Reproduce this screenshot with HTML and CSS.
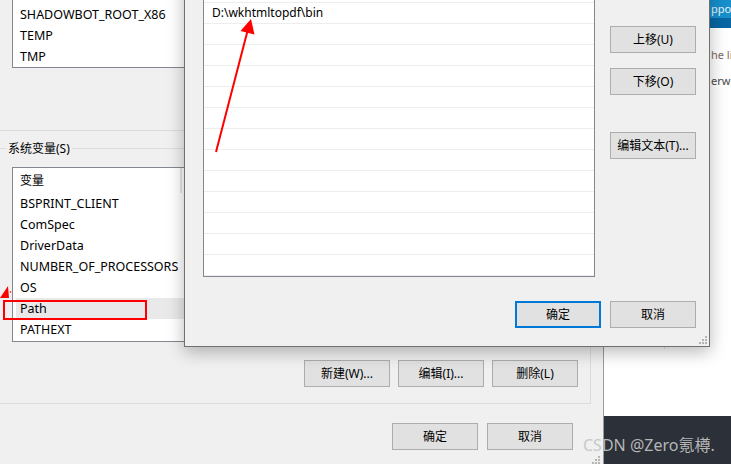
FILE: index.html
```html
<!DOCTYPE html>
<html lang="zh-CN">
<head>
<meta charset="utf-8">
<title>编辑环境变量</title>
<link rel="stylesheet" href="styles.css">
</head>
<body>
<div class="webpage">
  <div class="wp-top"><span class="wp-top-text">pport</span></div>
  <div class="wp-strip"></div>
  <div class="wp-body">
    <p class="wp-l1">he lin</p>
    <p class="wp-l2">erwis</p>
    <div class="wp-rule"></div>
  </div>
  <div class="wp-foot"></div>
</div>

<div class="back">
  <div class="group1">
    <div class="ulist">
      <div class="urow"></div>
      <div class="urow">SHADOWBOT_ROOT_X86</div>
      <div class="urow">TEMP</div>
      <div class="urow">TMP</div>
    </div>
  </div>
  <fieldset class="group2">
    <legend>系统变量(S)</legend>
    <div class="slist">
      <div class="shead"><div class="shead-col">变量</div></div>
      <div class="srow">BSPRINT_CLIENT</div>
      <div class="srow">ComSpec</div>
      <div class="srow">DriverData</div>
      <div class="srow">NUMBER_OF_PROCESSORS</div>
      <div class="srow">OS</div>
      <div class="srow sel">Path</div>
      <div class="srow">PATHEXT</div>
    </div>
    <div class="sbtns">
      <button class="btn">新建(W)...</button>
      <button class="btn">编辑(I)...</button>
      <button class="btn">删除(L)</button>
    </div>
  </fieldset>
  <div class="back-foot">
    <button class="btn">确定</button>
    <button class="btn">取消</button>
  </div>
  <svg class="grip back-grip" width="8" height="8" viewBox="0 0 8 8"><g fill="#b4b4b4"><rect x="6" y="0" width="2" height="2"/><rect x="3" y="3" width="2" height="2"/><rect x="6" y="3" width="2" height="2"/><rect x="0" y="6" width="2" height="2"/><rect x="3" y="6" width="2" height="2"/><rect x="6" y="6" width="2" height="2"/></g></svg>
</div>

<div class="front">
  <div class="front-main">
    <div class="plist">
      <div class="prow"></div>
      <div class="prow">D:\wkhtmltopdf\bin</div>
      <div class="prow"></div>
      <div class="prow"></div>
      <div class="prow"></div>
      <div class="prow"></div>
      <div class="prow"></div>
      <div class="prow"></div>
      <div class="prow"></div>
      <div class="prow"></div>
      <div class="prow"></div>
      <div class="prow"></div>
      <div class="prow"></div>
      <div class="prow"></div>
    </div>
    <div class="pbtns">
      <button class="btn">上移(U)</button>
      <button class="btn btn-down">下移(O)</button>
      <button class="btn btn-text">编辑文本(T)...</button>
    </div>
  </div>
  <div class="front-foot">
    <button class="btn btn-default">确定</button>
    <button class="btn">取消</button>
  </div>
  <svg class="grip front-grip" width="8" height="8" viewBox="0 0 8 8"><g fill="#b4b4b4"><rect x="6" y="0" width="2" height="2"/><rect x="3" y="3" width="2" height="2"/><rect x="6" y="3" width="2" height="2"/><rect x="0" y="6" width="2" height="2"/><rect x="3" y="6" width="2" height="2"/><rect x="6" y="6" width="2" height="2"/></g></svg>
</div>

<svg class="annot" width="731" height="464" viewBox="0 0 731 464">
  <line x1="216" y1="152" x2="247.5" y2="31" stroke="#ff0000" stroke-width="2"/>
  <polygon points="251,19 240.5,31 254.5,34.5" fill="#ff0000"/>
  <rect x="4" y="301" width="142" height="18" fill="none" stroke="#ff0000" stroke-width="2"/>
  <polygon points="0,298 9,298 8,286" fill="#ff0000"/>
  <circle cx="10.5" cy="292" r="0.8" fill="#ff0000"/>
</svg>

<div class="watermark">CSDN @Zero氪樽.</div>
</body>
</html>
```

FILE: styles.css
```css
* {
  box-sizing: border-box;
}

html, body {
  margin: 0;
  padding: 0;
}

body {
  width: 731px;
  height: 464px;
  overflow: hidden;
  position: relative;
  background: #f0f0f0;
  font-family: "Noto Sans", "Noto Sans CJK SC", sans-serif;
  font-size: 12px;
  color: #000;
}

/* ---------- web page behind ---------- */
.webpage {
  position: absolute;
  left: 603px;
  top: 0;
  width: 128px;
  height: 464px;
  display: flex;
  flex-direction: column;
  background: #fff;
}

.wp-top {
  height: 18px;
  background: #168fcb;
  padding-left: 108px;
  color: #e8f4fb;
  font-size: 11px;
  line-height: 17px;
  white-space: nowrap;
  overflow: hidden;
}

.wp-strip {
  height: 10px;
  background: #0866a2;
}

.wp-body {
  flex: 1;
  display: flex;
  flex-direction: column;
  white-space: nowrap;
  overflow: hidden;
}

.wp-l1,
.wp-l2 {
  margin: 0;
  padding-left: 108px;
  font-size: 11px;
  line-height: 16px;
}

.wp-l1 {
  margin-top: 19px;
  color: #7a6a62;
}

.wp-l2 {
  margin-top: 10px;
  color: #4a4a4a;
}

.wp-rule {
  margin-left: 61px;
  margin-top: 200px;
  height: 60px;
  border-left: 1px solid #e4e4e4;
}

.wp-foot {
  height: 48px;
  background: #2c3039;
}

/* ---------- back dialog (environment variables) ---------- */
.back {
  position: absolute;
  left: -14px;
  top: -40px;
  width: 618px;
  height: 520px;
  background: #f0f0f0;
  border-right: 1px solid #9a9a9a;
}

.group1 {
  margin-left: 10px;
  width: 595px;
  border: 1px solid #dcdcdc;
  padding: 21px 0 62px 15px;
}

.ulist {
  width: 567px;
  border: 1px solid #828790;
  background: #fff;
  font-size: 12.5px;
}

.urow {
  height: 21px;
  line-height: 21px;
  padding-left: 7px;
  white-space: nowrap;
}

.group2 {
  margin: 9px 0 0 10px;
  width: 595px;
  min-width: 0;
  border: 1px solid #dcdcdc;
  padding: 10px 12px 16px 15px;
}

.group2 legend {
  margin-left: -6px;
  padding: 0 2px;
  line-height: 17px;
  font-size: 12px;
}

.slist {
  width: 567px;
  border: 1px solid #828790;
  background: #fff;
  padding-bottom: 1px;
  font-size: 12.5px;
}

.shead {
  height: 25px;
  display: flex;
}

.shead-col {
  width: 169px;
  padding-left: 7px;
  line-height: 25px;
  font-size: 12px;
  border-right: 2px solid #e5e5e5;
}

.srow {
  height: 21px;
  line-height: 21px;
  margin-left: 3px;
  padding-left: 4px;
  white-space: nowrap;
}

.srow.sel {
  background: #e9e9e9;
}

.sbtns {
  display: flex;
  justify-content: flex-end;
  gap: 8px;
  margin-top: 18px;
}

.back-foot {
  display: flex;
  justify-content: flex-end;
  gap: 9px;
  margin-top: 19px;
  padding-right: 30px;
}

.btn {
  width: 86px;
  height: 27px;
  padding: 0;
  margin: 0;
  background: #e1e1e1;
  border: 1px solid #adadad;
  font-family: "Noto Sans", "Noto Sans CJK SC", sans-serif;
  font-size: 12px;
  color: #000;
  line-height: 25px;
  text-align: center;
  white-space: nowrap;
}

.btn-default {
  border: 2px solid #0078d7;
  line-height: 23px;
}

.grip {
  position: absolute;
  display: block;
}

.back-grip {
  right: 3px;
  bottom: 16px;
}

/* ---------- front dialog (edit environment variable) ---------- */
.front {
  position: absolute;
  left: 184px;
  top: -30px;
  width: 526px;
  height: 377px;
  background: #f0f0f0;
  border: 1px solid #707070;
  box-shadow: 0 5px 16px rgba(0, 0, 0, 0.28);
  padding: 10px 13px 18px 18px;
  display: flex;
  flex-direction: column;
}

.front-main {
  display: flex;
  gap: 15px;
}

.plist {
  width: 392px;
  height: 296px;
  border: 1px solid #828790;
  background: #fff;
  overflow: hidden;
}

.prow {
  height: 21px;
  line-height: 20px;
  border-bottom: 1px solid #ededed;
  padding-left: 8px;
  white-space: nowrap;
}

.pbtns {
  display: flex;
  flex-direction: column;
  margin-top: 45px;
}

.btn-down {
  margin-top: 15px;
}

.btn-text {
  margin-top: 37px;
}

.front-foot {
  display: flex;
  justify-content: flex-end;
  gap: 9px;
  margin-top: 24px;
}

.front-grip {
  right: 2px;
  bottom: 2px;
}

/* ---------- annotations ---------- */
.annot {
  position: absolute;
  left: 0;
  top: 0;
}

.watermark {
  position: absolute;
  left: 583px;
  top: 434px;
  font-family: "Noto Sans", "Noto Sans CJK SC", sans-serif;
  font-size: 16px;
  line-height: 22px;
  color: rgba(196, 196, 196, 0.92);
  white-space: nowrap;
}
```
